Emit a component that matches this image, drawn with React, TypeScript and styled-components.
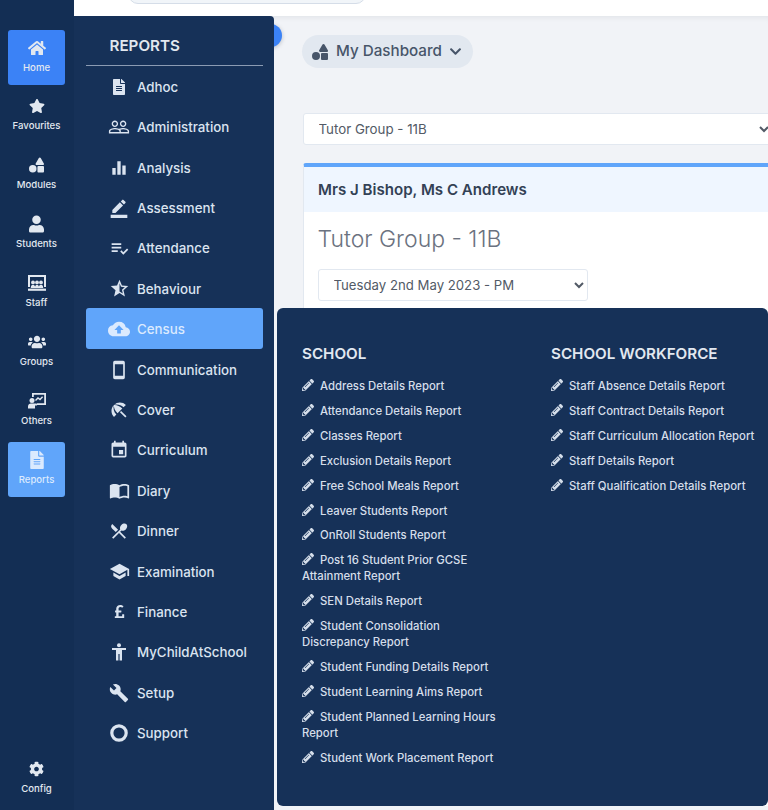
import React from "react";
import styled, { createGlobalStyle } from "styled-components";
import { FaHome, FaStar, FaShapes, FaUser, FaUsers, FaFileAlt, FaCog, FaChevronDown, FaPencilAlt, FaPoundSign } from "react-icons/fa";
import {
    MdPeopleOutline, MdEqualizer, MdBorderColor, MdPlaylistAddCheck, MdCloudUpload, MdSmartphone,
    MdBeachAccess, MdEvent, MdImportContacts, MdRestaurantMenu, MdSchool, MdBuild, MdStarHalf,
} from "react-icons/md";

const Global = createGlobalStyle`
    html, body { margin: 0; padding: 0; overflow: hidden; }
    * { box-sizing: border-box; }
    body { font-family: Inter, "Liberation Sans", sans-serif; }
`;

const StaffIcon = () => (
    <svg width="18" height="16" viewBox="0 0 18 16" fill="currentColor">
        <path d="M0 0h18v12h-2V2H2v10H0z" />
        <circle cx="5" cy="7.400" r="1.900" />
        <circle cx="9" cy="7.400" r="1.900" />
        <circle cx="13" cy="7.400" r="1.900" />
        <path d="M2.800 13c0-2 .9-3.200 2.200-3.200S7.200 11 7.200 13zM6.900 13c.1-2 .9-3.200 2.100-3.200s2 1.200 2.100 3.200zM10.800 13c0-2 .9-3.200 2.200-3.200s2.200 1.200 2.200 3.200z" />
        <rect x="0" y="13.600" width="18" height="2.200" />
    </svg>
);

const OthersIcon = () => (
    <svg width="18" height="16" viewBox="0 0 18 16" fill="currentColor">
        <path d="M4 0h14v12H9v-1.800h7.200V1.800H5.800V4H4z" />
        <path d="M7.500 7.500l2.500-2.500 2 1.600 2.600-2.800" fill="none" stroke="currentColor" strokeWidth="1.400" />
        <circle cx="4" cy="7.500" r="2.500" />
        <path d="M0 15.500v-2c0-1.800 1.300-3 3-3h5c.8 0 1 .6 1 1.200v.8H7v3z" />
    </svg>
);

const ChildIcon = () => (
    <svg width="16" height="18" viewBox="0 0 16 18" fill="currentColor">
        <circle cx="8" cy="2.200" r="2" />
        <path d="M1 5h14v2h-4v10.500H8.600V11H7.400v6.500H5V7H1z" />
    </svg>
);

const RingIcon = () => (
    <svg width="18" height="18" viewBox="0 0 18 18" fill="none" stroke="currentColor" strokeWidth="3.200">
        <circle cx="9" cy="9" r="7.200" />
    </svg>
);

const railItems = [
    { label: "Home", icon: <FaHome size={18} />, state: "home" },
    { label: "Favourites", icon: <FaStar size={16} /> },
    { label: "Modules", icon: <FaShapes size={15} /> },
    { label: "Students", icon: <FaUser size={15} /> },
    { label: "Staff", icon: <StaffIcon /> },
    { label: "Groups", icon: <FaUsers size={18} /> },
    { label: "Others", icon: <OthersIcon /> },
    { label: "Reports", icon: <FaFileAlt size={14} />, state: "open" },
];

const navItems = [
    { label: "Adhoc", icon: <FaFileAlt size={16} /> },
    { label: "Administration", icon: <MdPeopleOutline size={22} /> },
    { label: "Analysis", icon: <MdEqualizer size={20} /> },
    { label: "Assessment", icon: <MdBorderColor size={20} /> },
    { label: "Attendance", icon: <MdPlaylistAddCheck size={21} /> },
    { label: "Behaviour", icon: <MdStarHalf size={21} /> },
    { label: "Census", icon: <MdCloudUpload size={22} />, active: true },
    { label: "Communication", icon: <MdSmartphone size={20} /> },
    { label: "Cover", icon: <MdBeachAccess size={20} /> },
    { label: "Curriculum", icon: <MdEvent size={20} /> },
    { label: "Diary", icon: <MdImportContacts size={21} /> },
    { label: "Dinner", icon: <MdRestaurantMenu size={20} /> },
    { label: "Examination", icon: <MdSchool size={21} /> },
    { label: "Finance", icon: <FaPoundSign size={15} /> },
    { label: "MyChildAtSchool", icon: <ChildIcon /> },
    { label: "Setup", icon: <MdBuild size={20} /> },
    { label: "Support", icon: <RingIcon /> },
];

const school = [
    "Address Details Report",
    "Attendance Details Report",
    "Classes Report",
    "Exclusion Details Report",
    "Free School Meals Report",
    "Leaver Students Report",
    "OnRoll Students Report",
    "Post 16 Student Prior GCSE Attainment Report",
    "SEN Details Report",
    "Student Consolidation Discrepancy Report",
    "Student Funding Details Report",
    "Student Learning Aims Report",
    "Student Planned Learning Hours Report",
    "Student Work Placement Report",
];

const workforce = [
    "Staff Absence Details Report",
    "Staff Contract Details Report",
    "Staff Curriculum Allocation Report",
    "Staff Details Report",
    "Staff Qualification Details Report",
];

const ReportColumn = ({ title, items }: { title: string; items: string[] }) => (
    <div>
        <ColumnTitle>{title}</ColumnTitle>
        <ReportList>
            {items.map((item) => (
                <ReportLink key={item}>
                    <FaPencilAlt size={12} />
                    {item}
                </ReportLink>
            ))}
        </ReportList>
    </div>
);

export default function App() {
    return (
        <Page>
            <Global />
            <Rail>
                <RailList>
                    {railItems.map((item) => (
                        <RailButton key={item.label} $state={item.state}>
                            {item.icon}
                            <span>{item.label}</span>
                        </RailButton>
                    ))}
                </RailList>
                <RailFooter>
                    <FaCog size={15} />
                    <span>Config</span>
                </RailFooter>
            </Rail>
            <Main>
                <Header>
                    <SearchBox />
                </Header>
                <Content>
                    <DashboardPill>
                        <FaShapes size={16} />
                        <span>My Dashboard</span>
                        <FaChevronDown size={13} />
                    </DashboardPill>
                    <GroupSelect defaultValue="11B">
                        <option value="11B">Tutor Group - 11B</option>
                    </GroupSelect>
                    <Card>
                        <CardHeader>Mrs J Bishop, Ms C Andrews</CardHeader>
                        <CardBody>
                            <CardTitle>Tutor Group - 11B</CardTitle>
                            <DateSelect defaultValue="pm">
                                <option value="pm">Tuesday 2nd May 2023 - PM</option>
                            </DateSelect>
                        </CardBody>
                    </Card>
                </Content>
            </Main>
            <Toggle />
            <Flyout>
                <FlyoutTitle>REPORTS</FlyoutTitle>
                <NavList>
                    {navItems.map((item) => (
                        <NavRow key={item.label} $active={item.active}>
                            <NavIcon>{item.icon}</NavIcon>
                            {item.label}
                        </NavRow>
                    ))}
                </NavList>
            </Flyout>
            <SubMenu>
                <ReportColumn title="SCHOOL" items={school} />
                <ReportColumn title="SCHOOL WORKFORCE" items={workforce} />
            </SubMenu>
        </Page>
    );
}

const Page = styled.div`
    position: relative;
    display: flex;
    width: 768px;
    height: 810px;
    overflow: hidden;
    background: #f1f3f7;
`;
const Rail = styled.nav`
    display: flex;
    flex-direction: column;
    justify-content: space-between;
    flex: 0 0 74px;
    padding: 29.5px 0 15px 8px;
    background: #132e54;
`;
const RailList = styled.div`
    display: flex;
    flex-direction: column;
    gap: 3.9px;
`;
const RailButton = styled.div<{ $state?: string }>`
    display: flex;
    flex-direction: column;
    align-items: center;
    justify-content: center;
    gap: 5px;
    width: 57px;
    height: 55px;
    padding-bottom: 3px;
    border-radius: 3px;
    font-size: 9.6px;
    font-weight: 500;
    color: ${(p) => (p.$state === "open" ? "#dbeafe" : "#e2e8f0")};
    background: ${(p) => (p.$state === "home" ? "#3b82f6" : p.$state === "open" ? "#60a5fa" : "transparent")};
    svg {
        height: 18px;
    }
`;
const RailFooter = styled(RailButton)`
    height: 36px;
    padding-bottom: 0;
    gap: 5px;
`;
const Main = styled.div`
    display: flex;
    flex-direction: column;
    flex: 1;
    min-width: 0;
`;
const Header = styled.header`
    position: relative;
    flex: 0 0 16px;
    padding-left: 54px;
    overflow: hidden;
    background: #fff;
`;
const SearchBox = styled.div`
    width: 238px;
    height: 34px;
    margin-top: -30px;
    border: 1px solid #d5dde8;
    border-radius: 10px;
    background: #f1f5f9;
`;
const Content = styled.main`
    display: flex;
    flex-direction: column;
    align-items: flex-start;
    flex: 1;
    padding: 19px 0 0 228px;
    box-shadow: inset 0 6px 6px -5px rgba(15, 23, 42, 0.08);
`;
const DashboardPill = styled.div`
    display: flex;
    align-items: center;
    width: 170.5px;
    height: 33px;
    padding-left: 10px;
    border-radius: 17px;
    font-size: 15.2px;
    font-weight: 500;
    color: #475569;
    background: #e2e8f0;
    span {
        margin: -2px 7px 0 8px;
    }
`;
const GroupSelect = styled.select`
    flex: none;
    width: 470px;
    height: 32px;
    margin: 45px 0 0 0.5px;
    padding-left: 11px;
    border: 1px solid #e2e8f0;
    border-radius: 3px;
    font-family: inherit;
    font-size: 13.3px;
    color: #525a66;
    background-color: #fff;
`;
const Card = styled.section`
    flex: 1;
    width: 480px;
    margin: 18px 0 4px 0.5px;
    border-left: 1px solid #e2e8f0;
    border-top: 4px solid #60a5fa;
    border-radius: 3px 0 0 0;
    background: #fff;
`;
const CardHeader = styled.div`
    display: flex;
    align-items: center;
    height: 45px;
    padding-left: 14.5px;
    font-size: 15.1px;
    font-weight: 600;
    color: #334155;
    background: #eff6ff;
`;
const CardBody = styled.div`
    padding: 12px 14px;
`;
const CardTitle = styled.h2`
    margin: 0 0 15px;
    font-size: 23px;
    line-height: 30px;
    font-weight: 300;
    color: #6b7280;
`;
const DateSelect = styled.select`
    display: block;
    width: 270.5px;
    height: 32px;
    padding-left: 11px;
    border: 1px solid #e2e8f0;
    border-radius: 3px;
    font-family: inherit;
    font-size: 13.2px;
    color: #525a66;
    background-color: #fff;
`;
const Toggle = styled.div`
    position: absolute;
    left: 259px;
    top: 24px;
    width: 23px;
    height: 23px;
    border-radius: 50%;
    background: #3b82f6;
    box-shadow: 0 1px 4px rgba(15, 23, 42, 0.25);
`;
const Flyout = styled.aside`
    position: absolute;
    left: 74px;
    top: 16px;
    bottom: 0;
    width: 200px;
    padding: 0 11.5px;
    border-radius: 0 4px 0 0;
    background: #163158;
`;
const FlyoutTitle = styled.h3`
    height: 49.5px;
    margin: 0;
    padding: 20px 0 0 24px;
    border-bottom: 1px solid #8b9bb3;
    font-size: 15.2px;
    line-height: 20px;
    font-weight: 600;
    color: #e2e8f0;
`;
const NavList = styled.div`
    margin-top: 0.5px;
`;
const NavRow = styled.div<{ $active?: boolean }>`
    display: flex;
    align-items: center;
    height: 40.42px;
    padding: 1px 0 0 23.5px;
    border-radius: 3px;
    font-size: 13.3px;
    font-weight: 500;
    color: ${(p) => (p.$active ? "#dbeafe" : "#dbe4f0")};
    background: ${(p) => (p.$active ? "#60a5fa" : "transparent")};
`;
const NavIcon = styled.span`
    display: flex;
    align-items: center;
    justify-content: center;
    width: 20px;
    min-width: 0;
    flex: 0 0 20px;
    margin-right: 8px;
    svg {
        flex: none;
    }
`;
const SubMenu = styled.div`
    position: absolute;
    left: 276.5px;
    top: 308px;
    right: 0;
    height: 498px;
    display: grid;
    grid-template-columns: 249px 1fr;
    padding: 37px 0 0 25.5px;
    border-radius: 6px;
    background: #163158;
`;
const ColumnTitle = styled.h4`
    margin: 0 0 15px;
    font-size: 15.2px;
    line-height: 18px;
    font-weight: 600;
    color: #e2e8f0;
    white-space: nowrap;
`;
const ReportList = styled.div`
    display: flex;
    flex-direction: column;
    gap: 8.92px;
`;
const ReportLink = styled.div`
    max-width: 205px;
    font-size: 11.35px;
    line-height: 16px;
    font-weight: 500;
    color: #d5deea;
    svg {
        margin-right: 6px;
        vertical-align: -1px;
    }
`;
